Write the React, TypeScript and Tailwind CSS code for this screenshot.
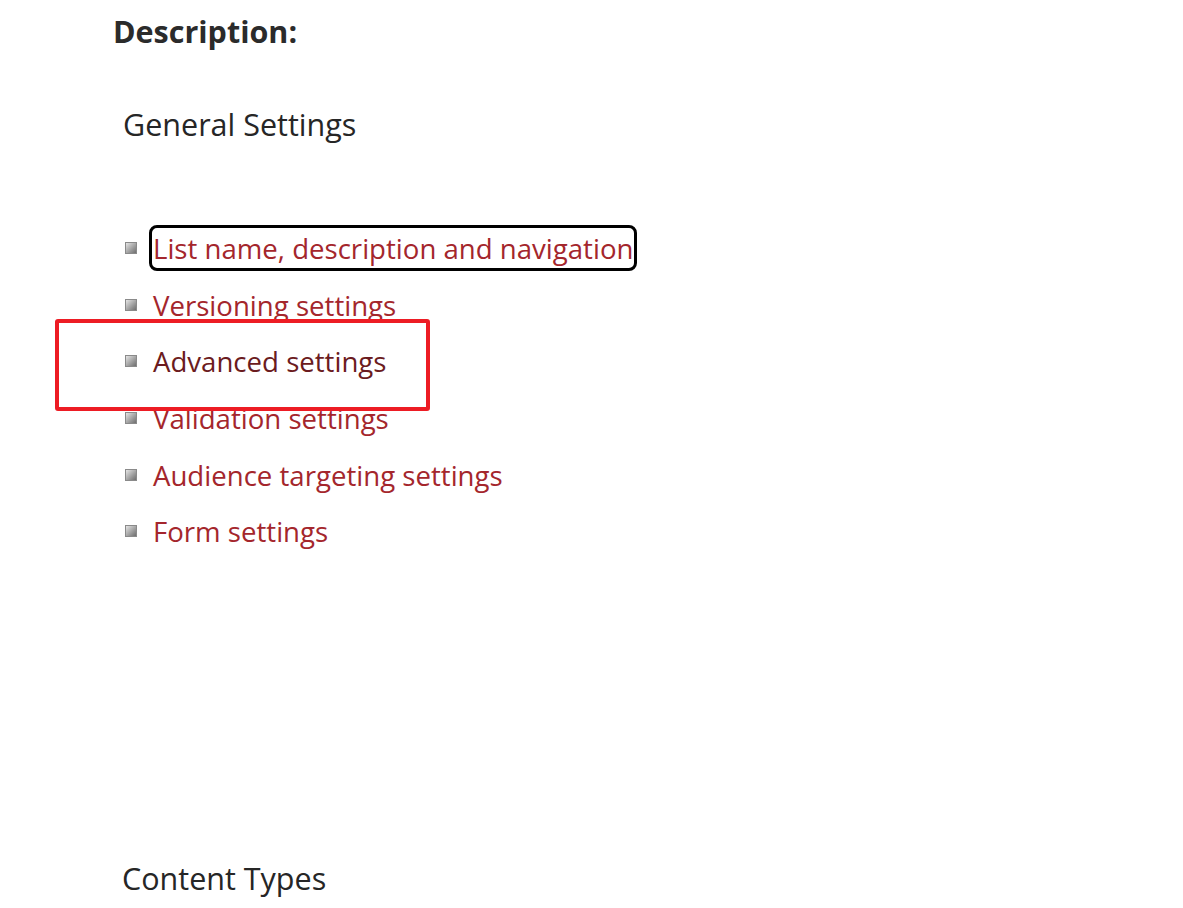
import React from 'react';

const links = [
  'List name, description and navigation',
  'Versioning settings',
  'Advanced settings',
  'Validation settings',
  'Audience targeting settings',
  'Form settings',
];

function Bullet() {
  return (
    <span className="inline-block w-[12px] h-[12px] border border-[#8a8a8a] bg-gradient-to-br from-[#e6e6e6] via-[#a9a9a9] to-[#6f6f6f] shrink-0" />
  );
}

export default function App() {
  return (
    <div className="relative w-[1183px] h-[908px] overflow-hidden bg-white font-['Open_Sans',sans-serif] text-[#2b2b2b]">
      <div className="pl-[113px] pt-[10px]">
        <h2 className="text-[30.5px] font-bold leading-[42px]">Description:</h2>
        <h3 className="mt-[52px] ml-[10px] text-[30.5px] leading-[40px] text-[#262626]">General Settings</h3>

        <ul className="mt-[76px] ml-[12px] flex flex-col">
          {links.map((label, i) => (
            <li key={label} className="flex items-center h-[56.6px] gap-[15px]">
              <Bullet />
              <a
                href="#"
                className={`text-[27.6px] leading-[40px] px-[1px] ${
                  i === 0 ? 'outline-[3px] outline-solid outline-black rounded-[5px]' : ''
                } ${i === 2 ? 'text-[#6b1b20]' : 'text-[#a4262c]'}`}
              >
                {label}
              </a>
            </li>
          ))}
        </ul>

        <h3 className="mt-[298px] ml-[9px] text-[30.5px] leading-[40px] text-[#262626]">Content Types</h3>
      </div>

      {/* annotation box */}
      <div className="absolute left-[55px] top-[319px] w-[375px] h-[92px] border-[4px] border-[#ed1c24] rounded-[3px]" />
    </div>
  );
}
